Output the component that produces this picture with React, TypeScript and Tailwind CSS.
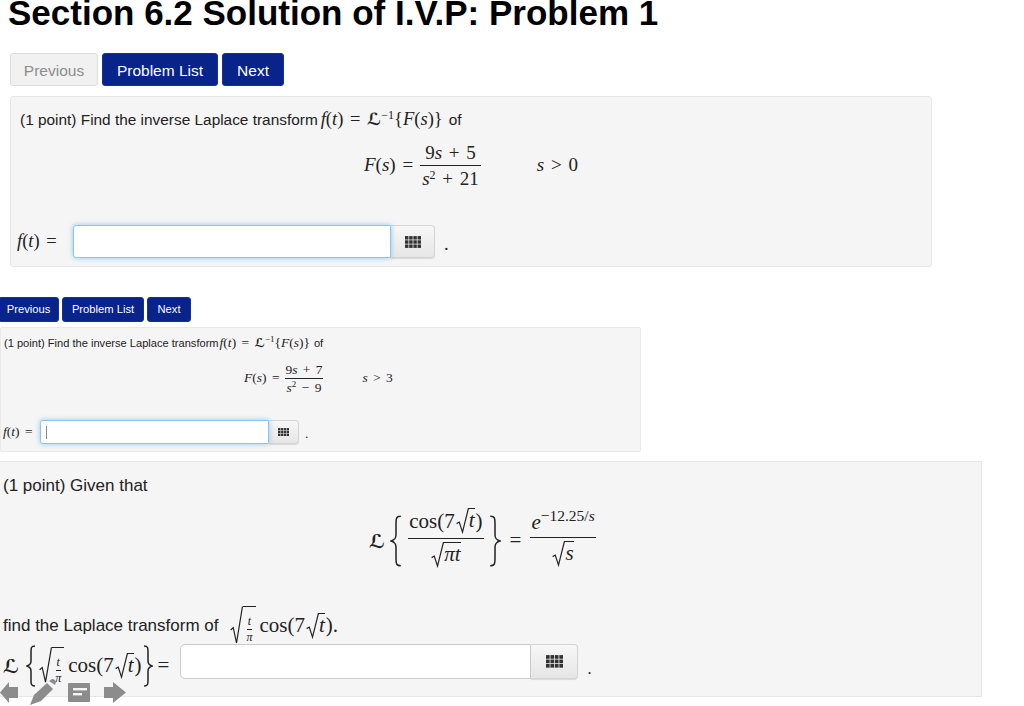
import type { ReactNode } from "react";

const serif = "font-['Liberation_Serif',serif] [word-spacing:2px]";

function Frac({ top, bottom, className }: { top: ReactNode; bottom: ReactNode; className?: string }) {
  return (
    <span className={`inline-flex flex-col items-center ${className ?? ""}`}>
      <span className="whitespace-nowrap w-full text-center border-b border-[#222]">{top}</span>
      <span className="whitespace-nowrap px-[2px]">{bottom}</span>
    </span>
  );
}

function Sqrt({ children, className }: { children: ReactNode; className?: string }) {
  return (
    <span className={`inline-flex items-stretch ${className ?? ""}`}>
      <svg viewBox="0 0 10 20" preserveAspectRatio="none" className="w-[0.62em] h-auto shrink-0 self-stretch">
        <path d="M0.5 12 L2.5 10.8 L5 18.5 L9.5 0.5 L10 0.5" fill="none" stroke="#222" strokeWidth="1.2" vectorEffect="non-scaling-stroke" />
      </svg>
      <span className="border-t border-[#222] leading-[1.05]">{children}</span>
    </span>
  );
}

function L() {
  return <span className="font-['DejaVu_Sans',sans-serif] text-[0.9em] font-bold">ℒ</span>;
}

function GridIcon({ size }: { size: number }) {
  const cells = [];
  for (let r = 0; r < 3; r++) {
    for (let c = 0; c < 4; c++) {
      cells.push(<rect key={`${r}-${c}`} x={c * 4} y={r * 4} width="3.3" height="3.3" fill="#333" />);
    }
  }
  return (
    <svg width={size} height={size * 0.75} viewBox="0 0 15.3 11.3">
      {cells}
    </svg>
  );
}

function Braces({ side, className }: { side: "l" | "r"; className?: string }) {
  const d =
    side === "l"
      ? "M9 1 C5 1 5 3 5 7 L5 16 C5 19 4 20 1 21 C4 22 5 23 5 26 L5 35 C5 39 5 41 9 41"
      : "M1 1 C5 1 5 3 5 7 L5 16 C5 19 6 20 9 21 C6 22 5 23 5 26 L5 35 C5 39 5 41 1 41";
  return (
    <svg viewBox="0 0 10 42" preserveAspectRatio="none" className={className}>
      <path d={d} fill="none" stroke="#222" strokeWidth="1.5" vectorEffect="non-scaling-stroke" />
    </svg>
  );
}

function NavButton({ children, className }: { children: ReactNode; className: string }) {
  return <button className={`rounded-[3px] border border-[#1a2f8f] bg-[#08248a] text-white text-center ${className}`}>{children}</button>;
}

function AnswerBox({ boxClass, btnClass, iconSize, focused, caret }: { boxClass: string; btnClass: string; iconSize: number; focused?: boolean; caret?: boolean }) {
  return (
    <span className="inline-flex">
      <span
        className={`flex items-center bg-white rounded-l-[3px] ${
          focused ? "border border-[#8fc4ee] shadow-[0_0_5px_rgba(82,168,236,0.6)] z-10" : "border border-[#ccc]"
        } ${boxClass}`}
      >
        {caret && <span className="ml-[5px] w-px h-[13px] bg-[#888]" />}
      </span>
      <span className={`flex items-center justify-center bg-gradient-to-b from-[#f7f7f7] to-[#e6e6e6] border border-l-0 border-[#d5d5d5] rounded-r-[4px] shadow-[0_1px_1px_rgba(0,0,0,0.12)] ${btnClass}`}>
        <GridIcon size={iconSize} />
      </span>
    </span>
  );
}

export default function App() {
  return (
    <div className="relative w-[1024px] h-[706px] overflow-hidden bg-white font-['Liberation_Sans',sans-serif] text-[#222]">
      <h1 className="pl-[8px] mt-[-8px] h-[61px] text-[35px] leading-[41px] font-bold text-black whitespace-nowrap">
        Section 6.2 Solution of I.V.P: Problem 1
      </h1>

      {/* first problem */}
      <div className="flex pl-[10px] gap-[4px] h-[33px] text-[15.5px]">
        <button className="w-[88px] pt-[2px] rounded-[3px] border border-[#dcdcdc] bg-[#f1f1f1] text-[#8d8d8d] text-center">Previous</button>
        <NavButton className="w-[116px] pt-[2px]">Problem List</NavButton>
        <NavButton className="w-[62px] pt-[2px]">Next</NavButton>
      </div>

      <section className="mt-[10px] ml-[10px] w-[922px] h-[171px] bg-[#f5f5f5] border border-[#e6e6e6] rounded-[3px] pl-[9px] text-[15.4px]">
        <div className="flex items-center h-[17px] mt-[14px] whitespace-nowrap">
          <span>(1 point) Find the inverse Laplace transform</span>
          <span className={`${serif} text-[18.5px] ml-[3px]`}>
            <i>f</i>(<i>t</i>) = <L /><sup className="text-[12px]">−1</sup>{"{"}<i>F</i>(<i>s</i>){"}"}
          </span>
          <span className="ml-[6px]">of</span>
        </div>
        <div className={`flex items-center mt-[10px] ml-[344px] text-[19px] h-[54px] ${serif}`}>
          <span className="whitespace-nowrap">
            <i>F</i>(<i>s</i>) =
          </span>
          <Frac
            className="ml-[7px] leading-[25px]"
            top={<>9<i>s</i> + 5</>}
            bottom={<><i>s</i><sup className="text-[12px]">2</sup> + 21</>}
          />
          <span className="ml-[56px] whitespace-nowrap"><i>s</i> &gt; 0</span>
        </div>
        <div className={`flex items-center mt-[33px] ${serif} text-[18.5px]`}>
          <span className="w-[45px] whitespace-nowrap ml-[-3px] mr-[11px]">
            <i>f</i>(<i>t</i>) =
          </span>
          <AnswerBox focused boxClass="w-[318px] h-[33px]" btnClass="w-[44px] h-[33px]" iconSize={16} />
          <span className="ml-[9px] mt-[6px]">.</span>
        </div>
      </section>

      {/* second problem, smaller */}
      <div className="flex mt-[30px] ml-[-2px] gap-[3px] h-[25px] text-[11.2px]">
        <NavButton className="w-[61px]">Previous</NavButton>
        <NavButton className="w-[82px]">Problem List</NavButton>
        <NavButton className="w-[44px]">Next</NavButton>
      </div>

      <section className="mt-[5px] w-[641px] h-[125px] bg-[#f5f5f5] border border-[#e9e9e9] rounded-[2px] pl-[3px] text-[11.1px]">
        <div className="flex items-center h-[14px] mt-[8px] whitespace-nowrap">
          <span>(1 point) Find the inverse Laplace transform</span>
          <span className={`${serif} text-[13.5px] ml-[1px]`}>
            <i>f</i>(<i>t</i>) = <L /><sup className="text-[9px]">−1</sup>{"{"}<i>F</i>(<i>s</i>){"}"}
          </span>
          <span className="ml-[4px]">of</span>
        </div>
        <div className={`flex items-center mt-[11px] ml-[240px] text-[13.5px] h-[34px] ${serif}`}>
          <span className="whitespace-nowrap">
            <i>F</i>(<i>s</i>) =
          </span>
          <Frac
            className="ml-[5px] leading-[17px]"
            top={<>9<i>s</i> + 7</>}
            bottom={<><i>s</i><sup className="text-[9px]">2</sup> − 9</>}
          />
          <span className="ml-[39px] whitespace-nowrap"><i>s</i> &gt; 3</span>
        </div>
        <div className={`flex items-center mt-[25px] ${serif} text-[13.5px]`}>
          <span className="w-[33px] whitespace-nowrap ml-[-1px] mr-[4px]">
            <i>f</i>(<i>t</i>) =
          </span>
          <AnswerBox focused caret boxClass="w-[229px] h-[24px]" btnClass="w-[30px] h-[24px]" iconSize={11} />
          <span className="ml-[6px] mt-[4px]">.</span>
        </div>
      </section>

      {/* third problem */}
      <section className="mt-[9px] w-[982px] h-[236px] bg-[#f5f5f5] border-t border-r border-b border-[#e6e6e6] pl-[3px] text-[17px]">
        <p className="mt-[15px] leading-[18px]">(1 point) Given that</p>
        <div className={`flex items-center mt-[13px] ml-[366px] h-[66px] text-[21px] ${serif}`}>
          <L />
          <Braces side="l" className="w-[12px] h-[52px] ml-[5px]" />
          <Frac
            className="ml-[6px] leading-[30px]"
            top={<span className="inline-flex items-center pb-[2px] px-[1px]">cos(7<Sqrt className="mx-[1px] leading-none"><i>t</i></Sqrt>)</span>}
            bottom={<span className="inline-flex justify-center"><Sqrt className="leading-none mt-[3px]"><i>πt</i></Sqrt></span>}
          />
          <Braces side="r" className="w-[12px] h-[52px] ml-[5px]" />
          <span className="ml-[9px]">=</span>
          <Frac
            className="ml-[9px] leading-[30px]"
            top={<span className="px-[1px]"><i>e</i><sup className="text-[15.5px]">−12.25/<i>s</i></sup></span>}
            bottom={<span className="inline-flex justify-center"><Sqrt className="leading-none mt-[3px]"><i>s</i></Sqrt></span>}
          />
        </div>
        <div className="flex items-center mt-[30px] h-[44px] whitespace-nowrap">
          <span>find the Laplace transform of</span>
          <span className={`flex items-center ml-[12px] text-[21px] ${serif}`}>
            <Sqrt className="h-[40px]">
              <span className="inline-flex flex-col items-center text-[12px] leading-[15px] mt-[1px] px-[3px]">
                <i className="border-b border-[#222] px-[1px]">t</i>
                <i>π</i>
              </span>
            </Sqrt>
            <span className="ml-[4px] inline-flex items-center">cos(7<Sqrt className="mx-[1px] leading-none"><i>t</i></Sqrt>).</span>
          </span>
        </div>
        <div className={`flex items-center mt-[-4px] h-[44px] text-[21px] ${serif}`}>
          <L />
          <Braces side="l" className="w-[10px] h-[42px] ml-[7px]" />
          <Sqrt className="h-[38px] ml-[3px]">
            <span className="inline-flex flex-col items-center text-[12px] leading-[15px] mt-[1px] px-[3px]">
              <i className="border-b border-[#222] px-[1px]">t</i>
              <i>π</i>
            </span>
          </Sqrt>
          <span className="ml-[4px] inline-flex items-center">cos(7<Sqrt className="mx-[1px] leading-none"><i>t</i></Sqrt>)</span>
          <Braces side="r" className="w-[10px] h-[42px] ml-[1px]" />
          <span className="ml-[5px]">=</span>
          <span className="ml-[11px]">
            <AnswerBox boxClass="w-[351px] h-[35px] rounded-l-[5px]" btnClass="w-[47px] h-[35px]" iconSize={17} />
          </span>
          <span className="ml-[9px] mt-[6px] text-[16px]">.</span>
        </div>
      </section>

      {/* floating toolbar over the page */}
      <svg viewBox="0 0 128 30" className="absolute left-0 top-[677px] w-[128px] h-[30px]" fill="#8c8c8c">
        <path d="M0 15.5 L9 5 L9 10 L18 10 L18 21 L9 21 L9 26 Z" />
        <path d="M30 28 L34 18 L47 6 L53 12 L41 24 Z" />
        <path d="M49 4 L52 2 Q55 2 56 5 L55 8 Z" />
        <rect x="68" y="6" width="22" height="19" rx="1" />
        <rect x="73" y="11" width="14" height="2.4" fill="#f5f5f5" />
        <rect x="73" y="16" width="9" height="2.4" fill="#f5f5f5" />
        <path d="M126 15.5 L113 5 L113 10 L104 10 L104 21 L113 21 L113 26 Z" />
      </svg>
    </div>
  );
}
